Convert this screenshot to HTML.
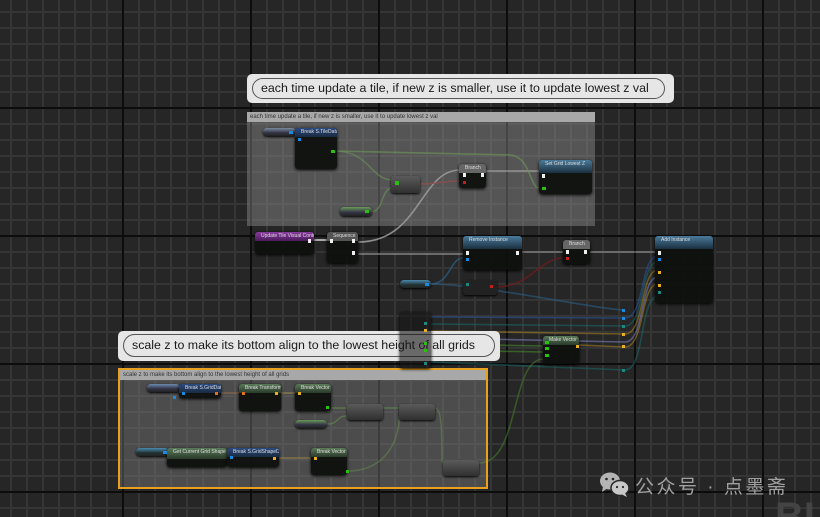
<!DOCTYPE html>
<html><head><meta charset="utf-8"><style>
*{margin:0;padding:0;box-sizing:border-box}
html,body{width:820px;height:517px;overflow:hidden}
body{position:relative;background-color:#262626;font-family:"Liberation Sans","Noto Sans CJK SC",sans-serif;
background-image:
linear-gradient(to right,#0c0c0c 0 2px,transparent 2px),
linear-gradient(to bottom,#0c0c0c 0 2px,transparent 2px),
linear-gradient(to right,#353535 0 2px,transparent 2px),
linear-gradient(to bottom,#353535 0 2px,transparent 2px);
background-size:128px 128px,128px 128px,16px 16px,16px 16px;
background-position:122px 0,0 107px,10px 0,0 11px;}
.a{position:absolute}
.cbox{position:absolute;background:rgba(150,150,150,0.42)}
.chead{position:absolute;left:0;right:0;top:0;height:10px;background:#a8a8a8;color:#333;font-size:6px;line-height:10px;padding-left:3px;white-space:nowrap;overflow:hidden}
.bub{position:absolute;background:#e6e6e6;border-radius:5px}
.pill{position:absolute;border:1px solid #555;border-radius:12px;color:#1a1a1a;font-size:12.4px;white-space:nowrap;overflow:hidden}
.n{position:absolute;background:rgba(14,16,14,0.94);border-radius:3px;box-shadow:0 1px 3px #000;overflow:hidden}
.h{height:9px;font-size:5px;color:#ddd;line-height:9px;padding-left:6px;white-space:nowrap;overflow:hidden}
.v{position:absolute;border-radius:4px;background:linear-gradient(#6a6a6a,#333 60%,#222);box-shadow:0 1px 2px #000}
.g{position:absolute;border-radius:3px;background:linear-gradient(#5a5a5a,#303030);box-shadow:0 1px 2px #000}
</style></head><body>

<svg class="a" style="left:0;top:0" width="820" height="517">
<g fill="none" stroke-width="1.6">
<path d="M358 242 C420 242 420 170 460 170" stroke="#bbb" opacity=".7"/>
<path d="M358 254 L463 254" stroke="#aaa" opacity=".7"/>
<path d="M486 171 L539 171" stroke="#bbb" opacity=".7"/>
<path d="M522 252 L563 252" stroke="#aaa" opacity=".6"/>
<path d="M590 252 L655 252" stroke="#aaa" opacity=".6"/>
<path d="M314 240 L327 240" stroke="#ccc"/>
<path d="M335 151 L510 155 C530 156 530 188 539 188" stroke="#4c8a2a" opacity=".7"/>
<path d="M335 151 C370 151 370 180 393 180" stroke="#4c8a2a" opacity=".6"/>
<path d="M370 212 C385 212 380 188 393 188" stroke="#4c8a2a" opacity=".6"/>
<path d="M420 184 C440 184 440 181 460 181" stroke="#8a1a1a" opacity=".8"/>
<path d="M497 287 C530 287 540 258 563 258" stroke="#7a1a1a" opacity=".7"/>
<path d="M431 284 C450 284 450 258 463 258" stroke="#2a6a9a" opacity=".6"/>
<path d="M431 284 C480 284 600 310 625 310" stroke="#2a6a9a" opacity=".5"/>
<path d="M431 317 L625 318 C645 318 640 256 658 256" stroke="#2a5ab0" opacity=".5"/>
<path d="M431 324 L625 326 C645 326 640 262 658 262" stroke="#1a7070" opacity=".5"/>
<path d="M431 331 L625 334 C645 334 640 270 658 270" stroke="#b08a20" opacity=".5"/>
<path d="M431 338 L625 342 C645 342 640 277 658 277" stroke="#8a8ad0" opacity=".5"/>
<path d="M431 344 L543 346" stroke="#4c9a2a" opacity=".5"/>
<path d="M431 350 L543 352" stroke="#4c9a2a" opacity=".5"/>
<path d="M579 345 L625 347 C645 347 640 284 658 284" stroke="#b08a20" opacity=".5"/>
<path d="M431 362 L625 370 C645 370 640 296 658 296" stroke="#1a7070" opacity=".5"/>
<path d="M479 463 C520 463 510 360 543 359" stroke="#4c8a2a" opacity=".5"/>
<path d="M221 393 L239 393" stroke="#b06020" opacity=".6"/>
<path d="M281 393 L295 393" stroke="#b09020" opacity=".6"/>
<path d="M331 408 L347 408" stroke="#4c8a2a" opacity=".6"/>
<path d="M383 408 L399 408" stroke="#4c8a2a" opacity=".6"/>
<path d="M327 424 C340 424 335 416 347 416" stroke="#4c8a2a" opacity=".6"/>
<path d="M279 458 L311 458" stroke="#b09020" opacity=".6"/>
<path d="M347 471 C400 471 400 416 399 416" stroke="#4c8a2a" opacity=".5"/>
<path d="M435 408 C445 408 440 463 443 463" stroke="#4c8a2a" opacity=".5"/>
</g></svg>

<div class="cbox" style="left:247px;top:112px;width:348px;height:114px"><div class="chead">each time update a tile, if new z is smaller, use it to update lowest z val</div></div>
<div class="bub" style="left:247px;top:74px;width:427px;height:29px"><div class="pill" style="left:5px;top:4px;width:413px;height:21px;line-height:19px;padding-left:8px">each time update a tile, if new z is smaller, use it to update lowest z val</div></div>

<div class="cbox" style="left:118px;top:368px;width:370px;height:121px;border:2px solid #e8a020;background:rgba(140,140,140,0.38)"><div class="chead" style="top:0">scale z to make its bottom align to the lowest height of all grids</div></div>
<div class="bub" style="left:118px;top:331px;width:382px;height:30px"><div class="pill" style="left:5px;top:3px;width:372px;height:23px;line-height:21px;padding-left:8px">scale z to make its bottom align to the lowest height of all grids</div></div>

<div class="v" style="left:263px;top:128px;width:33px;height:8px;background:linear-gradient(#7a8aa0,#334 60%,#222)"></div>
<div class="n" style="left:295px;top:128px;width:42px;height:41px"><div class="h" style="background:linear-gradient(#2a4a80,#1a2a40)">Break S.TileData</div></div>
<div class="g" style="left:391px;top:176px;width:29px;height:17px"></div>
<div class="v" style="left:340px;top:207px;width:32px;height:9px;background:linear-gradient(#6a9a5a,#334 60%,#222)"></div>
<div class="n" style="left:459px;top:164px;width:27px;height:24px"><div class="h" style="background:#666">Branch</div></div>
<div class="n" style="left:539px;top:160px;width:53px;height:34px"><div class="h" style="height:13px;background:linear-gradient(#4a7a9a,#1a3040)">Set Grid Lowest Z</div></div>
<div class="n" style="left:255px;top:232px;width:59px;height:22px"><div class="h" style="background:linear-gradient(#8a3aa0,#4a1a5a)">Update Tile Visual Content</div></div>
<div class="n" style="left:327px;top:232px;width:31px;height:31px"><div class="h" style="background:#555">Sequence</div></div>
<div class="n" style="left:463px;top:236px;width:59px;height:34px"><div class="h" style="height:13px;background:linear-gradient(#4a7a9a,#1a3040)">Remove Instance</div></div>
<div class="n" style="left:563px;top:240px;width:27px;height:24px"><div class="h" style="background:#666">Branch</div></div>
<div class="n" style="left:655px;top:236px;width:58px;height:67px"><div class="h" style="height:13px;background:linear-gradient(#4a7a9a,#1a3040)">Add Instance</div></div>
<div class="v" style="left:400px;top:280px;width:31px;height:8px;background:linear-gradient(#4a8ab0,#233 60%,#222)"></div>
<div class="g" style="left:463px;top:280px;width:34px;height:15px;background:#222"></div>
<div class="n" style="left:400px;top:312px;width:31px;height:56px;background:rgba(20,22,20,0.6)"></div>
<div class="n" style="left:543px;top:336px;width:36px;height:28px"><div class="h" style="background:linear-gradient(#5a7a5a,#2a3a2a)">Make Vector</div></div>

<div class="v" style="left:147px;top:384px;width:33px;height:8px;background:linear-gradient(#6a8ab0,#334 60%,#222)"></div>
<div class="n" style="left:179px;top:384px;width:42px;height:14px"><div class="h" style="background:linear-gradient(#2a4a80,#1a2a40)">Break S.GridData</div></div>
<div class="n" style="left:239px;top:384px;width:42px;height:27px"><div class="h" style="background:linear-gradient(#5a7a5a,#2a3a2a)">Break Transform</div></div>
<div class="n" style="left:295px;top:384px;width:36px;height:27px"><div class="h" style="background:linear-gradient(#5a7a5a,#2a3a2a)">Break Vector</div></div>
<div class="g" style="left:347px;top:404px;width:36px;height:16px"></div>
<div class="g" style="left:399px;top:404px;width:36px;height:16px"></div>
<div class="v" style="left:295px;top:420px;width:32px;height:8px;background:linear-gradient(#6a9a5a,#334 60%,#222)"></div>
<div class="v" style="left:136px;top:448px;width:33px;height:8px;background:linear-gradient(#4a8ab0,#233 60%,#222)"></div>
<div class="n" style="left:167px;top:448px;width:60px;height:19px"><div class="h" style="height:11px;background:linear-gradient(#5a7a5a,#2a3a2a)">Get Current Grid Shape Data</div></div>
<div class="n" style="left:227px;top:448px;width:52px;height:19px"><div class="h" style="background:linear-gradient(#2a4a80,#1a2a40)">Break S.GridShapeData</div></div>
<div class="n" style="left:311px;top:448px;width:36px;height:27px"><div class="h" style="background:linear-gradient(#5a7a5a,#2a3a2a)">Break Vector</div></div>
<div class="g" style="left:443px;top:460px;width:36px;height:16px"></div>

<svg class="a" style="left:0;top:0" width="820" height="517">
<g fill="#2ac010"><rect x="331" y="150" width="4" height="3"/><rect x="395" y="181" width="4" height="4"/><rect x="365" y="210" width="4" height="3"/><rect x="542" y="187" width="4" height="3"/><rect x="545" y="341" width="4" height="3"/><rect x="545" y="347" width="4" height="3"/><rect x="545" y="354" width="4" height="3"/><rect x="326" y="406" width="3" height="3"/><rect x="346" y="470" width="3" height="3"/><rect x="424" y="342" width="3" height="3"/><rect x="424" y="349" width="3" height="3"/></g>
<g fill="#eee"><rect x="463" y="173" width="3" height="4"/><rect x="481" y="173" width="3" height="4"/><rect x="542" y="174" width="3" height="4"/><rect x="308" y="239" width="3" height="4"/><rect x="330" y="239" width="3" height="4"/><rect x="352" y="239" width="3" height="4"/><rect x="352" y="251" width="3" height="4"/><rect x="466" y="251" width="3" height="4"/><rect x="516" y="251" width="3" height="4"/><rect x="566" y="250" width="3" height="4"/><rect x="584" y="250" width="3" height="4"/><rect x="658" y="251" width="3" height="4"/></g>
<g fill="#1a8ae0"><rect x="289" y="131" width="4" height="3"/><rect x="298" y="138" width="3" height="3"/><rect x="425" y="283" width="4" height="3"/><rect x="466" y="258" width="3" height="3"/><rect x="658" y="258" width="3" height="3"/><rect x="622" y="309" width="3" height="3"/><rect x="163" y="451" width="4" height="3"/><rect x="173" y="396" width="3" height="3"/><rect x="182" y="392" width="3" height="3"/><rect x="230" y="456" width="3" height="3"/><rect x="622" y="317" width="3" height="3"/></g>
<g fill="#e8b020"><rect x="658" y="271" width="3" height="3"/><rect x="658" y="284" width="3" height="3"/><rect x="576" y="345" width="3" height="3"/><rect x="622" y="333" width="3" height="3"/><rect x="622" y="345" width="3" height="3"/><rect x="424" y="329" width="3" height="3"/><rect x="275" y="392" width="3" height="3"/><rect x="298" y="392" width="3" height="3"/><rect x="273" y="457" width="3" height="3"/><rect x="314" y="457" width="3" height="3"/></g>
<g fill="#e07020"><rect x="215" y="392" width="3" height="3"/><rect x="242" y="392" width="3" height="3"/></g>
<g fill="#1a8a80"><rect x="658" y="291" width="3" height="3"/><rect x="622" y="325" width="3" height="3"/><rect x="622" y="369" width="3" height="3"/><rect x="424" y="322" width="3" height="3"/><rect x="424" y="362" width="3" height="3"/><rect x="466" y="283" width="3" height="3"/></g>
<g fill="#c02020"><rect x="463" y="181" width="3" height="3"/><rect x="566" y="257" width="3" height="3"/><rect x="490" y="285" width="3" height="3"/></g>
</svg>

<svg class="a" style="left:599px;top:471px" width="32" height="27">
<ellipse cx="11" cy="10" rx="10" ry="8.5" fill="#b4b4b4"/><path d="M4 16 L3 21 L9 17Z" fill="#b4b4b4"/>
<ellipse cx="21" cy="17" rx="9" ry="7.5" fill="#c8c8c8" stroke="#262626" stroke-width="1.5"/><path d="M26 22 L28 26 L22 23Z" fill="#c8c8c8"/>
<circle cx="7.5" cy="8" r="1.3" fill="#262626"/><circle cx="14" cy="8" r="1.3" fill="#262626"/><circle cx="18" cy="16" r="1.1" fill="#262626"/><circle cx="24" cy="16" r="1.1" fill="#262626"/>
</svg>
<div class="a" style="left:635px;top:472px;font-size:19px;color:#a0a0a0;white-space:nowrap;letter-spacing:2.5px">公众号 · 点墨斋</div>
<div class="a" style="left:775px;top:497px;font-size:40px;font-weight:bold;color:#444;line-height:40px">BL</div>
</body></html>
